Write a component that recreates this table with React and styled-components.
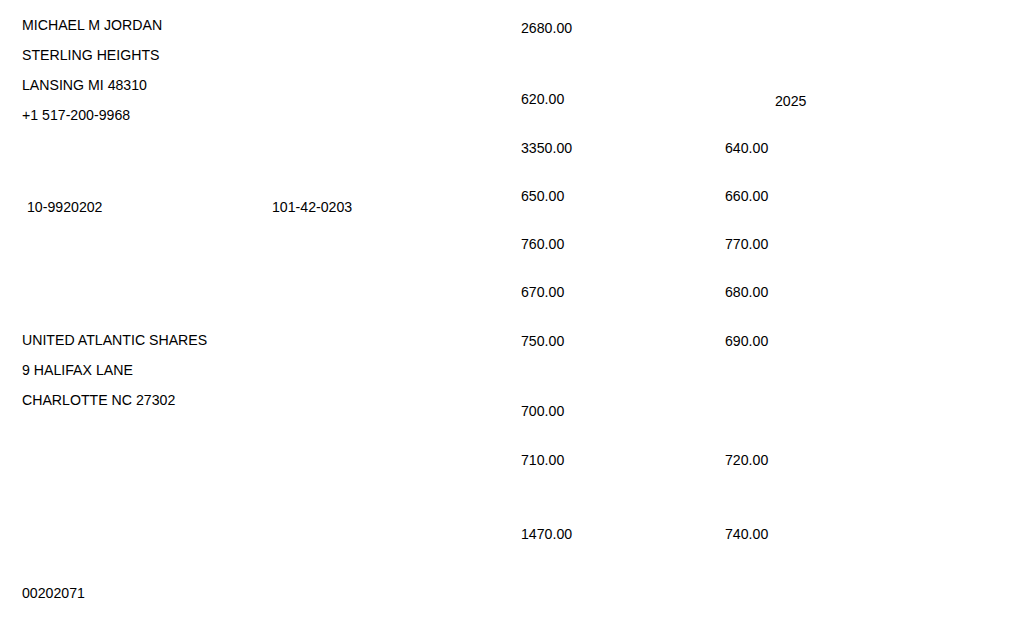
import React from "react";
import styled, { createGlobalStyle } from "styled-components";

const GlobalStyle = createGlobalStyle`
  html, body {
    margin: 0;
    padding: 0;
    background: #ffffff;
  }
  body {
    font-family: "Liberation Sans", Arial, sans-serif;
    font-size: 14.15px;
    color: #000000;
  }
`;

const Page = styled.div`
  width: 1018px;
  height: 622px;
  box-sizing: border-box;
  padding: 10px 0 0 22px;
  display: flex;
  align-items: flex-start;
  overflow: hidden;
`;

const LeftColumn = styled.div`
  width: 499px;
  display: flex;
  flex-direction: column;
`;

const AddressBlock = styled.div`
  display: flex;
  flex-direction: column;
  margin-top: ${(p) => p.$top || 0}px;
`;

const AddressLine = styled.div`
  line-height: 30px;
  height: 30px;
  white-space: nowrap;
`;

const IdRow = styled.div`
  display: grid;
  grid-template-columns: 245px auto;
  padding-left: 5px;
  margin-top: ${(p) => p.$top || 0}px;
  line-height: 20px;
`;

const Field = styled.div`
  line-height: 20px;
  white-space: nowrap;
  margin-top: ${(p) => p.$top || 0}px;
`;

const AmountTable = styled.div`
  display: flex;
  flex-direction: column;
  padding-top: 8px;
`;

const AmountRow = styled.div`
  display: grid;
  grid-template-columns: 204px 200px;
  height: ${(p) => p.$h}px;
  align-items: start;
`;

const Amount = styled.div`
  line-height: 20px;
  white-space: nowrap;
  padding-left: ${(p) => p.$dx || 0}px;
  padding-top: ${(p) => p.$dy || 0}px;
`;

const rows = [
  { h: 71, a: "2680.00", b: "" },
  { h: 49, a: "620.00", b: "2025", dx: 50, dy: 2 },
  { h: 48, a: "3350.00", b: "640.00" },
  { h: 48, a: "650.00", b: "660.00" },
  { h: 48, a: "760.00", b: "770.00" },
  { h: 49, a: "670.00", b: "680.00" },
  { h: 70, a: "750.00", b: "690.00" },
  { h: 49, a: "700.00", b: "" },
  { h: 74, a: "710.00", b: "720.00" },
  { h: 20, a: "1470.00", b: "740.00" },
];

export default function App() {
  return (
    <>
      <GlobalStyle />
      <Page>
        <LeftColumn>
          <AddressBlock>
            <AddressLine>MICHAEL M JORDAN</AddressLine>
            <AddressLine>STERLING HEIGHTS</AddressLine>
            <AddressLine>LANSING MI 48310</AddressLine>
            <AddressLine>+1 517-200-9968</AddressLine>
          </AddressBlock>
          <IdRow $top={67}>
            <span>10-9920202</span>
            <span>101-42-0203</span>
          </IdRow>
          <AddressBlock $top={108}>
            <AddressLine>UNITED ATLANTIC SHARES</AddressLine>
            <AddressLine>9 HALIFAX LANE</AddressLine>
            <AddressLine>CHARLOTTE NC 27302</AddressLine>
          </AddressBlock>
          <Field $top={168}>00202071</Field>
        </LeftColumn>
        <AmountTable>
          {rows.map((r, i) => (
            <AmountRow key={i} $h={r.h}>
              <Amount>{r.a}</Amount>
              <Amount $dx={r.dx} $dy={r.dy}>
                {r.b}
              </Amount>
            </AmountRow>
          ))}
        </AmountTable>
      </Page>
    </>
  );
}
